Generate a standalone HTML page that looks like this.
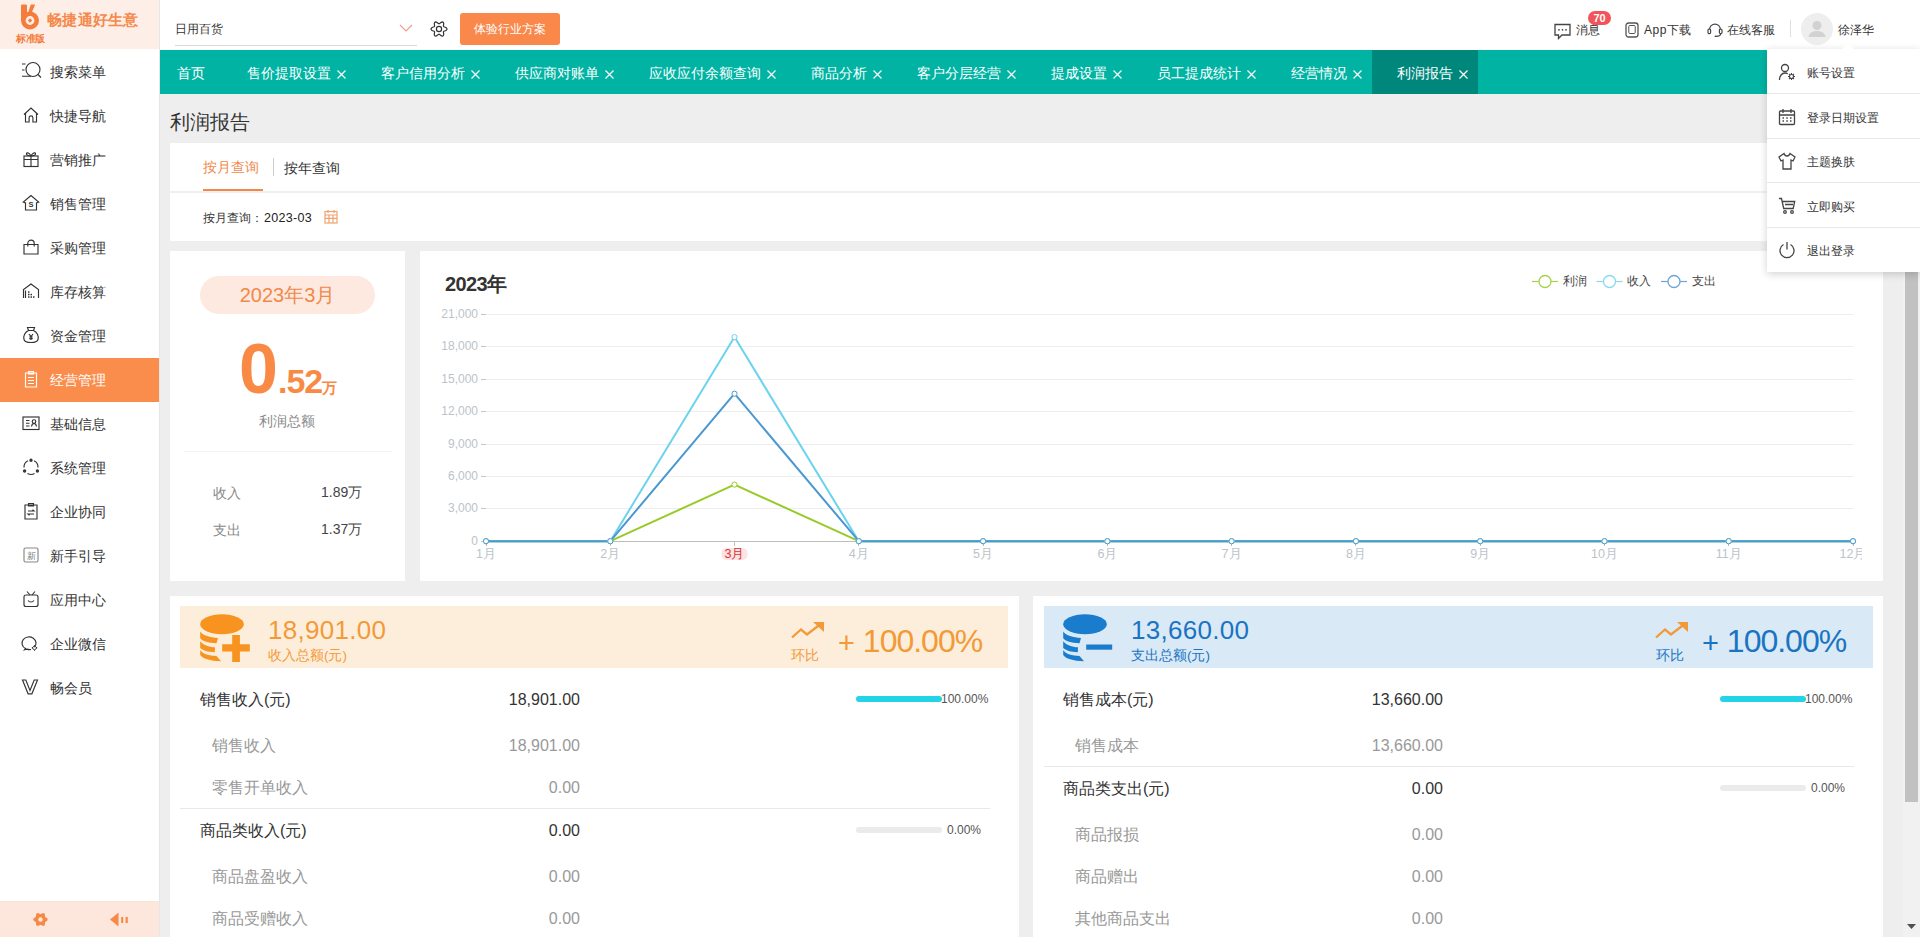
<!DOCTYPE html>
<html><head><meta charset="utf-8">
<style>
*{box-sizing:border-box;margin:0;padding:0}
html,body{width:1920px;height:937px;overflow:hidden}
body{position:relative;background:#eeeeee;font-family:"Liberation Sans",sans-serif;color:#333;font-size:14px}
.abs{position:absolute}
.nw{white-space:nowrap}
#side{left:0;top:0;width:160px;height:937px;background:#fff;border-right:1px solid #e6e6e6}
#logo{left:0;top:0;width:159px;height:49px;background:#fdefe7}
.mi{left:0;width:159px;height:44px}
.mi .ic{position:absolute;left:22px;top:12px;width:18px;height:18px;overflow:visible}
.mi .tx{position:absolute;left:50px;top:0;line-height:44px;font-size:14px;color:#333}
.mi.on{background:#fa8c4c}
.mi.on .tx{color:#fff}
#sbot{left:0;top:901px;width:159px;height:36px;background:#fde7dc;border-top:1px solid #fbe3d6}
#hdr{left:160px;top:0;width:1760px;height:50px;background:#fff}
#tabs{left:160px;top:50px;width:1760px;height:44px;background:#00b3a3}
.tab{top:0;height:44px;line-height:46px;color:#fff;font-size:14px;padding-left:25px}
.tab .x{display:inline-block;margin-left:6px;width:9px;height:9px;vertical-align:-1px}
.tab.on{background:#00877c}
.card{background:#fff}
.ht{font-size:12px;color:#333;line-height:16px}
.row{font-size:16px;color:#333;line-height:20px}
.sub{font-size:16px;color:#999;line-height:20px}
.val{text-align:right}
.bar{height:6px;border-radius:3px}
.pct{font-size:12px;color:#555;line-height:14px}
.dd{left:1767px;width:153px;height:45px;border-bottom:1px solid #e8e8e8}
.dd .ic{position:absolute;left:11px;top:14px;width:18px;height:18px}
.dd .tx{position:absolute;left:40px;top:2px;line-height:45px;font-size:12px;color:#333}
</style></head><body>

<div id="side" class="abs">
  <div id="logo" class="abs">
    <svg class="abs" style="left:14px;top:2px" width="28" height="30" viewBox="0 0 28 30">
      <circle cx="16" cy="18.5" r="9" fill="#f47c3c"/>
      <path d="M7 18.5V3.4Q7 2.4 8 2.4h4q1 0 1 1V14z" fill="#f47c3c"/>
      <path d="M16.8 2.6h3.4q.8 0 .6.8L17.6 11l-3.3-.9z" fill="#f47c3c"/>
      <circle cx="16" cy="18.5" r="4.4" fill="#fdefe7"/>
      <path d="M16 16.3l2.2 2.2-2.2 2.2-2.2-2.2z" fill="#f47c3c"/>
    </svg>
    <div class="abs nw" style="left:47px;top:11px;font-size:15px;line-height:18px;color:#f5884a;font-weight:bold;letter-spacing:0.3px">畅捷通好生意</div>
    <div class="abs nw" style="left:16px;top:33px;font-size:10px;line-height:12px;color:#f47c3c;font-weight:bold;letter-spacing:-0.5px">标准版</div>
  </div>
<div class="mi abs" style="top:50px"><svg class="ic" viewBox="0 0 18 18" fill="none" stroke="#333" stroke-width="1.15"><path d="M0 2h3.5M0 8h2.5M0 14.2h9"/><circle cx="11" cy="7.5" r="7"/><path d="M16 12.5l3 3"/></svg><span class="tx nw">搜索菜单</span></div>
<div class="mi abs" style="top:94px"><svg class="ic" viewBox="0 0 18 18" fill="none" stroke="#333" stroke-width="1.15"><path d="M2 8.5L9 2l7 6.5M3.5 7.2V16h3.6v-4.3a1.9 1.9 0 013.8 0V16h3.6V7.2"/></svg><span class="tx nw">快捷导航</span></div>
<div class="mi abs" style="top:138px"><svg class="ic" viewBox="0 0 18 18" fill="none" stroke="#333" stroke-width="1.15"><rect x="2" y="6" width="14" height="10.5"/><path d="M2 9.5h14M9 6v10.5M9 6C7.5 3 5 2 4.5 3.5S6.5 6 9 6c2.5 0 5-1 4.5-2.5S10.5 3 9 6"/></svg><span class="tx nw">营销推广</span></div>
<div class="mi abs" style="top:182px"><svg class="ic" viewBox="0 0 18 18" fill="none" stroke="#333" stroke-width="1.15"><path d="M9 1.5L1.3 8l2.2.9V16h11V8.9l2.2-.9z"/><text x="9" y="13" font-size="7.5" font-weight="bold" text-anchor="middle" fill="#333" stroke="none">S</text></svg><span class="tx nw">销售管理</span></div>
<div class="mi abs" style="top:226px"><svg class="ic" viewBox="0 0 18 18" fill="none" stroke="#333" stroke-width="1.15"><path d="M2 6.5h14V16H2zM5.8 8.5V5.3a3.2 3.2 0 016.4 0v3.2"/></svg><span class="tx nw">采购管理</span></div>
<div class="mi abs" style="top:270px"><svg class="ic" viewBox="0 0 18 18" fill="none" stroke="#333" stroke-width="1.15"><path d="M1.5 16V7.5L9 2l7.5 5.5V16M3.5 8.5V16"/><g fill="#333" stroke="none"><rect x="6" y="9.3" width="1.5" height="1.5"/><rect x="6" y="11.8" width="1.5" height="1.5"/><rect x="8.5" y="11.8" width="1.5" height="1.5"/><rect x="6" y="14.3" width="1.5" height="1.5"/><rect x="8.5" y="14.3" width="1.5" height="1.5"/><rect x="11" y="14.3" width="1.5" height="1.5"/></g></svg><span class="tx nw">库存核算</span></div>
<div class="mi abs" style="top:314px"><svg class="ic" viewBox="0 0 18 18" fill="none" stroke="#333" stroke-width="1.15"><path d="M6.5 4.5L5.5 1.5h7l-1 3M6.5 4.5h5C15 6 17 10 16 13.5 15.3 16 12.5 16.5 9 16.5S2.7 16 2 13.5C1 10 3 6 6.5 4.5z"/><path d="M7 8l2 2.5 2-2.5M9 10.5v3.5M7.3 11h3.4M7.3 12.6h3.4"/></svg><span class="tx nw">资金管理</span></div>
<div class="mi abs on" style="top:358px"><svg class="ic" viewBox="0 0 18 18" fill="none" stroke="#fff" stroke-width="1.15"><path d="M3.5 3h11v14h-11zM6.5 1.5h5V4h-5zM6 7.5h6M6 10.5h6M6 13.5h6"/></svg><span class="tx nw">经营管理</span></div>
<div class="mi abs" style="top:402px"><svg class="ic" viewBox="0 0 18 18" fill="none" stroke="#333" stroke-width="1.15"><rect x="1" y="3" width="16" height="12.5"/><path d="M4 6.5h3.5M4 9.2h3.5M4 12h3.5"/><circle cx="12" cy="7.5" r="1.8"/><path d="M9.5 12.5c.3-2 1.3-3 2.5-3s2.2 1 2.5 3"/></svg><span class="tx nw">基础信息</span></div>
<div class="mi abs" style="top:446px"><svg class="ic" viewBox="0 0 18 18" fill="none" stroke="#333" stroke-width="1.15"><path d="M6 2.8A7 7 0 002 9.5M12 2.8a7 7 0 014 6.7M5.5 15.5a7 7 0 007 0"/><circle cx="9" cy="2.2" r="1.1" fill="#444"/><circle cx="2.6" cy="13" r="1.1" fill="#444"/><circle cx="15.4" cy="13" r="1.1" fill="#444"/></svg><span class="tx nw">系统管理</span></div>
<div class="mi abs" style="top:490px"><svg class="ic" viewBox="0 0 18 18" fill="none" stroke="#333" stroke-width="1.15"><path d="M3 3h12v14H3zM6.5 1.5h5V4h-5zM6 9h6l-1.5-1.3M12 12H6l1.5 1.3"/></svg><span class="tx nw">企业协同</span></div>
<div class="mi abs" style="top:534px"><svg class="ic" viewBox="0 0 18 18" fill="none" stroke="#333" stroke-width="1.15"><rect x="2" y="2" width="14" height="14" rx="1.5" stroke="#888"/><text x="9" y="12.6" font-size="8.5" text-anchor="middle" fill="#777" stroke="none">新</text></svg><span class="tx nw">新手引导</span></div>
<div class="mi abs" style="top:578px"><svg class="ic" viewBox="0 0 18 18" fill="none" stroke="#333" stroke-width="1.15"><rect x="2" y="5" width="14" height="11.5" rx="2"/><path d="M5 1.5l3 3.5M13 1.5l-3 3.5M6 10.5c1.5 2 4.5 2 6 0"/></svg><span class="tx nw">应用中心</span></div>
<div class="mi abs" style="top:622px"><svg class="ic" viewBox="0 0 18 18" fill="none" stroke="#333" stroke-width="1.15"><path d="M12.3 13.2A7 6.2 0 10 3.5 14.5l-1 1.2 2.3-.6c1.3.5 2.7.6 4.2.4"/><path d="M12.5 11.3l1 1.6 1.6 1-1.6 1-1 1.6-1-1.6-1.6-1 1.6-1z" stroke-width="1"/></svg><span class="tx nw">企业微信</span></div>
<div class="mi abs" style="top:666px"><svg class="ic" viewBox="0 0 18 18" fill="none" stroke="#333" stroke-width="1.15"><path d="M0.5 2h3.3L8 12.5 12.2 2h3.3L9.9 15.8H6.1z"/></svg><span class="tx nw">畅会员</span></div>
  <div id="sbot" class="abs">
    <svg class="abs" style="left:32.5px;top:10px" width="15" height="15" viewBox="0 0 15 15"><path fill="#f58a46" fill-rule="evenodd" d="M14.70 7.50 L14.55 8.12 L14.15 8.67 L13.59 9.13 L13.00 9.50 L12.50 9.83 L12.18 10.20 L12.02 10.67 L11.98 11.26 L11.95 11.95 L11.84 12.67 L11.56 13.30 L11.10 13.74 L10.49 13.92 L9.81 13.84 L9.13 13.59 L8.52 13.26 L7.98 13.00 L7.50 12.90 L7.02 13.00 L6.48 13.26 L5.87 13.59 L5.19 13.84 L4.51 13.92 L3.90 13.74 L3.44 13.30 L3.16 12.67 L3.05 11.95 L3.02 11.26 L2.98 10.67 L2.82 10.20 L2.50 9.83 L2.00 9.50 L1.41 9.13 L0.85 8.67 L0.45 8.12 L0.30 7.50 L0.45 6.88 L0.85 6.33 L1.41 5.87 L2.00 5.50 L2.50 5.17 L2.82 4.80 L2.98 4.33 L3.02 3.74 L3.05 3.05 L3.16 2.33 L3.44 1.70 L3.90 1.26 L4.51 1.08 L5.19 1.16 L5.87 1.41 L6.48 1.74 L7.02 2.00 L7.50 2.10 L7.98 2.00 L8.52 1.74 L9.13 1.41 L9.81 1.16 L10.49 1.08 L11.10 1.26 L11.56 1.70 L11.84 2.33 L11.95 3.05 L11.98 3.74 L12.02 4.33 L12.18 4.80 L12.50 5.17 L13.00 5.50 L13.59 5.87 L14.15 6.33 L14.55 6.88 L14.70 7.50Z M7.5 5.3a2.2 2.2 0 110 4.4a2.2 2.2 0 110-4.4z"/></svg>
    <svg class="abs" style="left:110px;top:10px" width="20" height="16" viewBox="0 0 20 16"><path fill="#f58a46" d="M0 7.5L8.5 0.5v14z"/><rect x="11.2" y="5" width="2" height="6" fill="#f58a46"/><rect x="15.6" y="5" width="2.2" height="6" fill="#f58a46"/></svg>
  </div>
</div>

<div id="hdr" class="abs">
  <div class="abs nw" style="left:15px;top:21px;font-size:12px;line-height:16px;color:#333">日用百货</div>
  <div class="abs" style="left:15px;top:45px;width:242px;height:1px;background:#d9d9d9"></div>
  <svg class="abs" style="left:239px;top:24px" width="14" height="9" viewBox="0 0 14 9"><path d="M1 1l6 6 6-6" fill="none" stroke="#eca08e" stroke-width="1.2"/></svg>
  <svg class="abs" style="left:270px;top:20px" width="18" height="18" viewBox="0 0 18 18"><path fill="none" stroke="#333" stroke-width="1.2" stroke-linejoin="round" d="M17.00 9.00 L16.78 9.68 L16.19 10.27 L15.38 10.71 L14.54 11.02 L13.88 11.28 L13.50 11.60 L13.41 12.09 L13.52 12.79 L13.67 13.67 L13.69 14.59 L13.48 15.40 L13.00 15.93 L12.30 16.08 L11.50 15.86 L10.71 15.38 L10.02 14.81 L9.47 14.37 L9.00 14.20 L8.53 14.37 L7.98 14.81 L7.29 15.38 L6.50 15.86 L5.70 16.08 L5.00 15.93 L4.52 15.40 L4.31 14.59 L4.33 13.67 L4.48 12.79 L4.59 12.09 L4.50 11.60 L4.12 11.28 L3.46 11.02 L2.62 10.71 L1.81 10.27 L1.22 9.68 L1.00 9.00 L1.22 8.32 L1.81 7.73 L2.62 7.29 L3.46 6.98 L4.12 6.72 L4.50 6.40 L4.59 5.91 L4.48 5.21 L4.33 4.33 L4.31 3.41 L4.52 2.60 L5.00 2.07 L5.70 1.92 L6.50 2.14 L7.29 2.62 L7.98 3.19 L8.53 3.63 L9.00 3.80 L9.47 3.63 L10.02 3.19 L10.71 2.62 L11.50 2.14 L12.30 1.92 L13.00 2.07 L13.48 2.60 L13.69 3.41 L13.67 4.33 L13.52 5.21 L13.41 5.91 L13.50 6.40 L13.88 6.72 L14.54 6.98 L15.38 7.29 L16.19 7.73 L16.78 8.32 L17.00 9.00Z"/><circle cx="9" cy="9" r="2.6" fill="none" stroke="#333" stroke-width="1.2"/></svg>
  <div class="abs nw" style="left:300px;top:13px;width:100px;height:32px;border-radius:3px;background:#f9884a;color:#fff;font-size:12px;line-height:32px;text-align:center">体验行业方案</div>

  <svg class="abs" style="left:1394px;top:23px" width="17" height="17" viewBox="0 0 17 17"><path fill="none" stroke="#444" stroke-width="1.3" d="M1 1.5h15v10.5H8l-3.5 3.5V12H1z"/><circle cx="5" cy="6.8" r=".9" fill="#444"/><circle cx="8.5" cy="6.8" r=".9" fill="#444"/><circle cx="12" cy="6.8" r=".9" fill="#444"/></svg>
  <div class="abs nw ht" style="left:1416px;top:22px">消息</div>
  <div class="abs nw" style="left:1428px;top:11px;width:23px;height:14px;border-radius:7px;background:#f1545a;color:#fff;font-size:11px;font-weight:bold;line-height:14px;text-align:center">70</div>
  <svg class="abs" style="left:1465px;top:22px" width="14" height="16" viewBox="0 0 14 16"><rect x="1" y="1" width="12" height="14" rx="2.5" fill="none" stroke="#555" stroke-width="1.3"/><rect x="3.8" y="3.5" width="6.4" height="8" rx="1" fill="none" stroke="#555" stroke-width="1"/></svg>
  <div class="abs nw ht" style="left:1484px;top:22px;letter-spacing:0.5px">App下载</div>
  <svg class="abs" style="left:1547px;top:21px" width="16" height="16" viewBox="0 0 16 16"><g fill="none" stroke="#444" stroke-width="1.2"><path d="M2.6 8.5a5.4 5.4 0 0110.8 0"/><rect x="1" y="8" width="2.6" height="4.6" rx="1.2"/><rect x="12.4" y="8" width="2.6" height="4.6" rx="1.2"/><path d="M13.7 12.6c0 1.8-1.8 2.8-4.6 2.8"/></g><circle cx="8.6" cy="15.4" r="1" fill="#444"/></svg>
  <div class="abs nw ht" style="left:1567px;top:22px">在线客服</div>
  <div class="abs" style="left:1630px;top:20px;width:1px;height:17px;background:#e0e0e0"></div>
  <div class="abs" style="left:1641px;top:13px;width:32px;height:32px;border-radius:16px;background:#eeeeee;overflow:hidden">
    <svg width="32" height="32" viewBox="0 0 32 32"><circle cx="16" cy="12.5" r="4.5" fill="#d2d2d2"/><path d="M7.5 24c.5-4 4-6 8.5-6s8 2 8.5 6z" fill="#d2d2d2"/></svg>
  </div>
  <div class="abs nw ht" style="left:1678px;top:22px">徐泽华</div>
</div>

<div id="tabs" class="abs">
<div class="tab abs nw" style="left:0;width:62px;padding-left:17px">首页</div>
<div class="tab abs nw" style="left:62px;width:134px">售价提取设置<svg class="x" viewBox="0 0 9 9" stroke="#fff" stroke-width="1.2"><path d="M.5 .5l8 8M8.5 .5l-8 8"/></svg></div>
<div class="tab abs nw" style="left:196px;width:134px">客户信用分析<svg class="x" viewBox="0 0 9 9" stroke="#fff" stroke-width="1.2"><path d="M.5 .5l8 8M8.5 .5l-8 8"/></svg></div>
<div class="tab abs nw" style="left:330px;width:134px">供应商对账单<svg class="x" viewBox="0 0 9 9" stroke="#fff" stroke-width="1.2"><path d="M.5 .5l8 8M8.5 .5l-8 8"/></svg></div>
<div class="tab abs nw" style="left:464px;width:162px">应收应付余额查询<svg class="x" viewBox="0 0 9 9" stroke="#fff" stroke-width="1.2"><path d="M.5 .5l8 8M8.5 .5l-8 8"/></svg></div>
<div class="tab abs nw" style="left:626px;width:106px">商品分析<svg class="x" viewBox="0 0 9 9" stroke="#fff" stroke-width="1.2"><path d="M.5 .5l8 8M8.5 .5l-8 8"/></svg></div>
<div class="tab abs nw" style="left:732px;width:134px">客户分层经营<svg class="x" viewBox="0 0 9 9" stroke="#fff" stroke-width="1.2"><path d="M.5 .5l8 8M8.5 .5l-8 8"/></svg></div>
<div class="tab abs nw" style="left:866px;width:106px">提成设置<svg class="x" viewBox="0 0 9 9" stroke="#fff" stroke-width="1.2"><path d="M.5 .5l8 8M8.5 .5l-8 8"/></svg></div>
<div class="tab abs nw" style="left:972px;width:134px">员工提成统计<svg class="x" viewBox="0 0 9 9" stroke="#fff" stroke-width="1.2"><path d="M.5 .5l8 8M8.5 .5l-8 8"/></svg></div>
<div class="tab abs nw" style="left:1106px;width:106px">经营情况<svg class="x" viewBox="0 0 9 9" stroke="#fff" stroke-width="1.2"><path d="M.5 .5l8 8M8.5 .5l-8 8"/></svg></div>
<div class="tab abs nw on" style="left:1212px;width:106px">利润报告<svg class="x" viewBox="0 0 9 9" stroke="#fff" stroke-width="1.2"><path d="M.5 .5l8 8M8.5 .5l-8 8"/></svg></div>
</div>

<!-- page title -->
<div class="abs nw" style="left:170px;top:110px;font-size:20px;line-height:24px;color:#333">利润报告</div>

<!-- query card -->
<div class="abs card" style="left:170px;top:143px;width:1735px;height:98px">
  <div class="abs nw" style="left:33px;top:15px;font-size:14px;line-height:18px;color:#f0894a">按月查询</div>
  <div class="abs" style="left:33px;top:46px;width:60px;height:2px;background:#f0894a"></div>
  <div class="abs" style="left:103px;top:15px;width:1px;height:18px;background:#ccc"></div>
  <div class="abs nw" style="left:114px;top:16px;font-size:14px;line-height:18px;color:#333">按年查询</div>
  <div class="abs" style="left:0;top:48px;width:1735px;height:2px;background:#f0f0f0"></div>
  <div class="abs nw" style="left:33px;top:67px;font-size:12px;line-height:16px;color:#333">按月查询：</div><div class="abs nw" style="left:94px;top:67px;font-size:12.5px;line-height:16px;color:#222;letter-spacing:0.3px">2023-03</div>
  <svg class="abs" style="left:154px;top:66px" width="14" height="15" viewBox="0 0 14 15"><g fill="none" stroke="#f0a36e" stroke-width="1.2"><rect x="1" y="2.5" width="12" height="11.5"/><path d="M1 6h12M1 9.3h12M5 6v8M9 6v8M4 1v3M10 1v3"/></g></svg>
</div>

<!-- summary card -->
<div class="abs card" style="left:170px;top:251px;width:235px;height:330px">
  <div class="abs nw" style="left:30px;top:25px;width:175px;height:38px;border-radius:19px;background:#fde9df;color:#f0894a;font-size:20px;line-height:38px;text-align:center">2023年3月</div>
  <div class="abs nw" style="left:69px;top:78px;color:#f98a46;font-weight:bold;line-height:80px">
    <span style="font-size:70px">0</span><span style="font-size:34px;margin-left:0px;letter-spacing:-1px">.52</span><span style="font-size:15px;margin-left:0px">万</span>
  </div>
  <div class="abs nw" style="left:89px;top:161px;font-size:14px;line-height:18px;color:#888">利润总额</div>
  <div class="abs" style="left:14px;top:200px;width:208px;height:1px;background:#f3f3f3"></div>
  <div class="abs nw" style="left:43px;top:233px;font-size:14px;line-height:18px;color:#888">收入</div>
  <div class="abs nw" style="left:151px;top:232px;font-size:14px;line-height:18px;color:#444">1.89万</div>
  <div class="abs nw" style="left:43px;top:270px;font-size:14px;line-height:18px;color:#888">支出</div>
  <div class="abs nw" style="left:151px;top:269px;font-size:14px;line-height:18px;color:#444">1.37万</div>
</div>

<!-- chart card -->
<div class="abs card" style="left:420px;top:251px;width:1463px;height:330px"></div>
<svg class="abs" style="left:420px;top:251px" width="1463" height="330" viewBox="420 251 1463 330">
<path d="M486 508.5H1853" stroke="#eceef1" stroke-width="1"/>
<path d="M486 476.5H1853" stroke="#eceef1" stroke-width="1"/>
<path d="M486 444.5H1853" stroke="#eceef1" stroke-width="1"/>
<path d="M486 411.5H1853" stroke="#eceef1" stroke-width="1"/>
<path d="M486 379.5H1853" stroke="#eceef1" stroke-width="1"/>
<path d="M486 346.5H1853" stroke="#eceef1" stroke-width="1"/>
<path d="M486 314.5H1853" stroke="#eceef1" stroke-width="1"/>
<path d="M481 541.5H486" stroke="#c4c8ce" stroke-width="1"/>
<text x="478" y="544.9" text-anchor="end" font-size="12" fill="#bcc3c9">0</text>
<path d="M481 508.5H486" stroke="#c4c8ce" stroke-width="1"/>
<text x="478" y="511.9" text-anchor="end" font-size="12" fill="#bcc3c9">3,000</text>
<path d="M481 476.5H486" stroke="#c4c8ce" stroke-width="1"/>
<text x="478" y="479.9" text-anchor="end" font-size="12" fill="#bcc3c9">6,000</text>
<path d="M481 444.5H486" stroke="#c4c8ce" stroke-width="1"/>
<text x="478" y="447.9" text-anchor="end" font-size="12" fill="#bcc3c9">9,000</text>
<path d="M481 411.5H486" stroke="#c4c8ce" stroke-width="1"/>
<text x="478" y="414.9" text-anchor="end" font-size="12" fill="#bcc3c9">12,000</text>
<path d="M481 379.5H486" stroke="#c4c8ce" stroke-width="1"/>
<text x="478" y="382.9" text-anchor="end" font-size="12" fill="#bcc3c9">15,000</text>
<path d="M481 346.5H486" stroke="#c4c8ce" stroke-width="1"/>
<text x="478" y="349.9" text-anchor="end" font-size="12" fill="#bcc3c9">18,000</text>
<path d="M481 314.5H486" stroke="#c4c8ce" stroke-width="1"/>
<text x="478" y="317.9" text-anchor="end" font-size="12" fill="#bcc3c9">21,000</text>
<path d="M486 541.5H1853" stroke="#bdbdbd" stroke-width="1"/>
<path d="M486.5 542V546" stroke="#bdbdbd" stroke-width="1"/>
<path d="M610.5 542V546" stroke="#bdbdbd" stroke-width="1"/>
<path d="M734.5 542V546" stroke="#bdbdbd" stroke-width="1"/>
<path d="M858.5 542V546" stroke="#bdbdbd" stroke-width="1"/>
<path d="M983.5 542V546" stroke="#bdbdbd" stroke-width="1"/>
<path d="M1107.5 542V546" stroke="#bdbdbd" stroke-width="1"/>
<path d="M1231.5 542V546" stroke="#bdbdbd" stroke-width="1"/>
<path d="M1355.5 542V546" stroke="#bdbdbd" stroke-width="1"/>
<path d="M1480.5 542V546" stroke="#bdbdbd" stroke-width="1"/>
<path d="M1604.5 542V546" stroke="#bdbdbd" stroke-width="1"/>
<path d="M1728.5 542V546" stroke="#bdbdbd" stroke-width="1"/>
<path d="M1853.5 542V546" stroke="#bdbdbd" stroke-width="1"/>
<defs><clipPath id="cl"><rect x="420" y="251" width="1442" height="330"/></clipPath></defs><g clip-path="url(#cl)">
<text x="486.0" y="557.8" text-anchor="middle" font-size="12.5" fill="#bcc3c9">1月</text>
<text x="610.3" y="557.8" text-anchor="middle" font-size="12.5" fill="#bcc3c9">2月</text>
<rect x="721.5" y="548" width="26" height="12" rx="5" fill="#fde3e1"/>
<text x="734.5" y="557.8" text-anchor="middle" font-size="12.5" fill="#d8343c">3月</text>
<text x="858.8" y="557.8" text-anchor="middle" font-size="12.5" fill="#bcc3c9">4月</text>
<text x="983.1" y="557.8" text-anchor="middle" font-size="12.5" fill="#bcc3c9">5月</text>
<text x="1107.4" y="557.8" text-anchor="middle" font-size="12.5" fill="#bcc3c9">6月</text>
<text x="1231.6" y="557.8" text-anchor="middle" font-size="12.5" fill="#bcc3c9">7月</text>
<text x="1355.9" y="557.8" text-anchor="middle" font-size="12.5" fill="#bcc3c9">8月</text>
<text x="1480.2" y="557.8" text-anchor="middle" font-size="12.5" fill="#bcc3c9">9月</text>
<text x="1604.5" y="557.8" text-anchor="middle" font-size="12.5" fill="#bcc3c9">10月</text>
<text x="1728.7" y="557.8" text-anchor="middle" font-size="12.5" fill="#bcc3c9">11月</text>
<text x="1853.0" y="557.8" text-anchor="middle" font-size="12.5" fill="#bcc3c9">12月</text>
</g>
<polyline points="486.0,541.2 610.3,541.2 734.5,484.6 858.8,541.2 983.1,541.2 1107.4,541.2 1231.6,541.2 1355.9,541.2 1480.2,541.2 1604.5,541.2 1728.7,541.2 1853.0,541.2" fill="none" stroke="#97cb27" stroke-width="2" stroke-linejoin="round"/>
<polyline points="486.0,541.2 610.3,541.2 734.5,337.1 858.8,541.2 983.1,541.2 1107.4,541.2 1231.6,541.2 1355.9,541.2 1480.2,541.2 1604.5,541.2 1728.7,541.2 1853.0,541.2" fill="none" stroke="#6cd3ef" stroke-width="2" stroke-linejoin="round"/>
<polyline points="486.0,541.2 610.3,541.2 734.5,393.7 858.8,541.2 983.1,541.2 1107.4,541.2 1231.6,541.2 1355.9,541.2 1480.2,541.2 1604.5,541.2 1728.7,541.2 1853.0,541.2" fill="none" stroke="#4a98d2" stroke-width="2" stroke-linejoin="round"/>
<circle cx="486.0" cy="541.2" r="2.6" fill="#fff" stroke="#97cb27" stroke-width="1"/>
<circle cx="610.3" cy="541.2" r="2.6" fill="#fff" stroke="#97cb27" stroke-width="1"/>
<circle cx="734.5" cy="484.6" r="2.6" fill="#fff" stroke="#97cb27" stroke-width="1"/>
<circle cx="858.8" cy="541.2" r="2.6" fill="#fff" stroke="#97cb27" stroke-width="1"/>
<circle cx="983.1" cy="541.2" r="2.6" fill="#fff" stroke="#97cb27" stroke-width="1"/>
<circle cx="1107.4" cy="541.2" r="2.6" fill="#fff" stroke="#97cb27" stroke-width="1"/>
<circle cx="1231.6" cy="541.2" r="2.6" fill="#fff" stroke="#97cb27" stroke-width="1"/>
<circle cx="1355.9" cy="541.2" r="2.6" fill="#fff" stroke="#97cb27" stroke-width="1"/>
<circle cx="1480.2" cy="541.2" r="2.6" fill="#fff" stroke="#97cb27" stroke-width="1"/>
<circle cx="1604.5" cy="541.2" r="2.6" fill="#fff" stroke="#97cb27" stroke-width="1"/>
<circle cx="1728.7" cy="541.2" r="2.6" fill="#fff" stroke="#97cb27" stroke-width="1"/>
<circle cx="1853.0" cy="541.2" r="2.6" fill="#fff" stroke="#97cb27" stroke-width="1"/>
<circle cx="486.0" cy="541.2" r="2.6" fill="#fff" stroke="#6cd3ef" stroke-width="1"/>
<circle cx="610.3" cy="541.2" r="2.6" fill="#fff" stroke="#6cd3ef" stroke-width="1"/>
<circle cx="734.5" cy="337.1" r="2.6" fill="#fff" stroke="#6cd3ef" stroke-width="1"/>
<circle cx="858.8" cy="541.2" r="2.6" fill="#fff" stroke="#6cd3ef" stroke-width="1"/>
<circle cx="983.1" cy="541.2" r="2.6" fill="#fff" stroke="#6cd3ef" stroke-width="1"/>
<circle cx="1107.4" cy="541.2" r="2.6" fill="#fff" stroke="#6cd3ef" stroke-width="1"/>
<circle cx="1231.6" cy="541.2" r="2.6" fill="#fff" stroke="#6cd3ef" stroke-width="1"/>
<circle cx="1355.9" cy="541.2" r="2.6" fill="#fff" stroke="#6cd3ef" stroke-width="1"/>
<circle cx="1480.2" cy="541.2" r="2.6" fill="#fff" stroke="#6cd3ef" stroke-width="1"/>
<circle cx="1604.5" cy="541.2" r="2.6" fill="#fff" stroke="#6cd3ef" stroke-width="1"/>
<circle cx="1728.7" cy="541.2" r="2.6" fill="#fff" stroke="#6cd3ef" stroke-width="1"/>
<circle cx="1853.0" cy="541.2" r="2.6" fill="#fff" stroke="#6cd3ef" stroke-width="1"/>
<circle cx="486.0" cy="541.2" r="2.6" fill="#fff" stroke="#4a98d2" stroke-width="1"/>
<circle cx="610.3" cy="541.2" r="2.6" fill="#fff" stroke="#4a98d2" stroke-width="1"/>
<circle cx="734.5" cy="393.7" r="2.6" fill="#fff" stroke="#4a98d2" stroke-width="1"/>
<circle cx="858.8" cy="541.2" r="2.6" fill="#fff" stroke="#4a98d2" stroke-width="1"/>
<circle cx="983.1" cy="541.2" r="2.6" fill="#fff" stroke="#4a98d2" stroke-width="1"/>
<circle cx="1107.4" cy="541.2" r="2.6" fill="#fff" stroke="#4a98d2" stroke-width="1"/>
<circle cx="1231.6" cy="541.2" r="2.6" fill="#fff" stroke="#4a98d2" stroke-width="1"/>
<circle cx="1355.9" cy="541.2" r="2.6" fill="#fff" stroke="#4a98d2" stroke-width="1"/>
<circle cx="1480.2" cy="541.2" r="2.6" fill="#fff" stroke="#4a98d2" stroke-width="1"/>
<circle cx="1604.5" cy="541.2" r="2.6" fill="#fff" stroke="#4a98d2" stroke-width="1"/>
<circle cx="1728.7" cy="541.2" r="2.6" fill="#fff" stroke="#4a98d2" stroke-width="1"/>
<circle cx="1853.0" cy="541.2" r="2.6" fill="#fff" stroke="#4a98d2" stroke-width="1"/>
<text x="445" y="290.5" font-size="20" font-weight="bold" fill="#333" letter-spacing="-0.6">2023年</text>
<path d="M1532 281.5H1558" stroke="#a6d24a" stroke-width="1.2"/><circle cx="1545" cy="281.5" r="6" fill="#fff" stroke="#a6d24a" stroke-width="1.3"/>
<text x="1562.5" y="285" font-size="12" fill="#444">利润</text>
<path d="M1596.5 281.5H1622.5" stroke="#86d9ef" stroke-width="1.2"/><circle cx="1609.5" cy="281.5" r="6" fill="#fff" stroke="#86d9ef" stroke-width="1.3"/>
<text x="1627.0" y="285" font-size="12" fill="#444">收入</text>
<path d="M1661 281.5H1687" stroke="#6fa4d6" stroke-width="1.2"/><circle cx="1674" cy="281.5" r="6" fill="#fff" stroke="#6fa4d6" stroke-width="1.3"/>
<text x="1691.5" y="285" font-size="12" fill="#444">支出</text>
</svg>

<!-- income card -->
<div class="abs card" style="left:170px;top:596px;width:849px;height:341px">
  <div class="abs" style="left:10px;top:10px;width:828px;height:62px;background:#fdeedc"></div>
  <svg class="abs" style="left:25px;top:12px" width="60" height="60" viewBox="0 0 60 60">
    <g fill="#f7931e">
    <ellipse cx="27" cy="16.2" rx="21.8" ry="10"/>
    <path d="M5.2 23.5C8 27.5 15 29.5 23 30L21.5 35.3C13 35 7.5 33 5.2 30.3z"/>
    <path d="M5.2 33.2C8 37 14 39 20 39.3L19.8 44.3C13 44 7.5 42.3 5.2 40z"/>
    <path d="M5.2 42.3C8 46 14 47.8 21.5 48L26 53.3C15 53 7.5 50.5 5.2 47z"/>
    <path d="M37.2 27h7.7v9.2h9.9v7.4h-9.9V54h-7.7v-10.4H27.2v-7.4h10z"/>
    </g>
  </svg>
  <div class="abs nw" style="left:98px;top:19px;font-size:26px;line-height:30px;letter-spacing:0.3px;color:#f39a38">18,901.00</div>
  <div class="abs nw" style="left:98px;top:52px;font-size:13.5px;line-height:16px;color:#f39a38">收入总额(元)</div>
  <svg class="abs" style="left:621px;top:25px" width="34" height="18" viewBox="0 0 34 18"><path d="M1 16.5l9-8 6 5 13-10" fill="none" stroke="#f39a38" stroke-width="2.3"/><path d="M22 1h11v10z" fill="#f39a38"/></svg>
  <div class="abs nw" style="left:621px;top:51px;font-size:14px;line-height:16px;color:#f39a38">环比</div>
  <div class="abs nw" style="left:668px;top:28px;font-size:32px;line-height:34px;letter-spacing:-1px;color:#f39a38"><span style="font-size:29px;position:relative;top:1px;letter-spacing:0">+</span> 100.00%</div>

  <div class="abs nw row" style="left:30px;top:94px">销售收入(元)</div>
  <div class="abs nw row val" style="left:310px;top:94px;width:100px">18,901.00</div>
  <div class="abs bar" style="left:686px;top:100px;width:86px;background:#24d3e6"></div>
  <div class="abs nw pct" style="left:771px;top:96px">100.00%</div>
  <div class="abs nw sub" style="left:42px;top:140px">销售收入</div>
  <div class="abs nw sub val" style="left:310px;top:140px;width:100px">18,901.00</div>
  <div class="abs nw sub" style="left:42px;top:182px">零售开单收入</div>
  <div class="abs nw sub val" style="left:310px;top:182px;width:100px">0.00</div>
  <div class="abs" style="left:10px;top:212px;width:810px;height:1px;background:#e8e8e8"></div>
  <div class="abs nw row" style="left:30px;top:225px">商品类收入(元)</div>
  <div class="abs nw row val" style="left:310px;top:225px;width:100px">0.00</div>
  <div class="abs bar" style="left:686px;top:231px;width:86px;background:#ebebeb"></div>
  <div class="abs nw pct" style="left:777px;top:227px">0.00%</div>
  <div class="abs nw sub" style="left:42px;top:271px">商品盘盈收入</div>
  <div class="abs nw sub val" style="left:310px;top:271px;width:100px">0.00</div>
  <div class="abs nw sub" style="left:42px;top:313px">商品受赠收入</div>
  <div class="abs nw sub val" style="left:310px;top:313px;width:100px">0.00</div>
</div>

<!-- expense card -->
<div class="abs card" style="left:1033px;top:596px;width:850px;height:341px">
  <div class="abs" style="left:11px;top:10px;width:829px;height:62px;background:#d9eaf6"></div>
  <svg class="abs" style="left:25px;top:12px" width="60" height="60" viewBox="0 0 60 60">
    <g fill="#1a7ccd">
    <ellipse cx="27" cy="16.2" rx="21.8" ry="10"/>
    <path d="M5.2 23.5C8 27.5 15 29.5 23 30L21.5 35.3C13 35 7.5 33 5.2 30.3z"/>
    <path d="M5.2 33.2C8 37 14 39 20 39.3L19.8 44.3C13 44 7.5 42.3 5.2 40z"/>
    <path d="M5.2 42.3C8 46 14 47.8 21.5 48L26 53.3C15 53 7.5 50.5 5.2 47z"/>
    <path d="M28.2 36.5h26v5.2h-26z"/>
    </g>
  </svg>
  <div class="abs nw" style="left:98px;top:19px;font-size:26px;line-height:30px;letter-spacing:0.3px;color:#1a74c2">13,660.00</div>
  <div class="abs nw" style="left:98px;top:52px;font-size:13.5px;line-height:16px;color:#1a74c2">支出总额(元)</div>
  <svg class="abs" style="left:622px;top:25px" width="34" height="18" viewBox="0 0 34 18"><path d="M1 16.5l9-8 6 5 13-10" fill="none" stroke="#f39a38" stroke-width="2.3"/><path d="M22 1h11v10z" fill="#f39a38"/></svg>
  <div class="abs nw" style="left:623px;top:51px;font-size:14px;line-height:16px;color:#1a74c2">环比</div>
  <div class="abs nw" style="left:669px;top:28px;font-size:32px;line-height:34px;letter-spacing:-1px;color:#1a74c2"><span style="font-size:29px;position:relative;top:1px;letter-spacing:0">+</span> 100.00%</div>

  <div class="abs nw row" style="left:30px;top:94px">销售成本(元)</div>
  <div class="abs nw row val" style="left:310px;top:94px;width:100px">13,660.00</div>
  <div class="abs bar" style="left:687px;top:100px;width:86px;background:#24d3e6"></div>
  <div class="abs nw pct" style="left:772px;top:96px">100.00%</div>
  <div class="abs nw sub" style="left:42px;top:140px">销售成本</div>
  <div class="abs nw sub val" style="left:310px;top:140px;width:100px">13,660.00</div>
  <div class="abs" style="left:11px;top:170px;width:810px;height:1px;background:#e8e8e8"></div>
  <div class="abs nw row" style="left:30px;top:183px">商品类支出(元)</div>
  <div class="abs nw row val" style="left:310px;top:183px;width:100px">0.00</div>
  <div class="abs bar" style="left:687px;top:189px;width:86px;background:#ebebeb"></div>
  <div class="abs nw pct" style="left:778px;top:185px">0.00%</div>
  <div class="abs nw sub" style="left:42px;top:229px">商品报损</div>
  <div class="abs nw sub val" style="left:310px;top:229px;width:100px">0.00</div>
  <div class="abs nw sub" style="left:42px;top:271px">商品赠出</div>
  <div class="abs nw sub val" style="left:310px;top:271px;width:100px">0.00</div>
  <div class="abs nw sub" style="left:42px;top:313px">其他商品支出</div>
  <div class="abs nw sub val" style="left:310px;top:313px;width:100px">0.00</div>
</div>

<!-- scrollbar -->
<div class="abs" style="left:1903px;top:94px;width:17px;height:843px;background:#f1f1f1"></div>
<div class="abs" style="left:1905px;top:94px;width:13px;height:708px;background:#c1c1c1"></div>
<svg class="abs" style="left:1907px;top:924px" width="9" height="6" viewBox="0 0 9 6"><path d="M0 0h9L4.5 5z" fill="#505050"/></svg>

<!-- dropdown -->
<div class="abs" style="left:1767px;top:49px;width:153px;height:223px;background:#fff;box-shadow:0 2px 8px rgba(0,0,0,.18)">
</div>
<svg class="abs" style="left:1841px;top:43px" width="14" height="7" viewBox="0 0 14 7"><path d="M0 7L7 0l7 7z" fill="#fff"/></svg>
<div class="dd abs" style="top:49px;"><svg class="ic" viewBox="0 0 18 18" fill="none" stroke="#444" stroke-width="1.3"><circle cx="7" cy="5" r="3.5"/><path d="M1.5 17c0-4 2.3-7 5.5-7 1 0 2 .3 2.7.8"/><circle cx="13.5" cy="13.5" r="2" stroke-width="1.1"/><path d="M13.5 10v1.3M13.5 15.7V17M10 13.5h1.3M15.7 13.5H17M11 11l.9.9M15.1 15.1l.9.9M11 16l.9-.9M15.1 11.9l.9-.9" stroke-width="1.1"/></svg><span class="tx nw">账号设置</span></div>
<div class="dd abs" style="top:94px;"><svg class="ic" viewBox="0 0 18 18" fill="none" stroke="#444" stroke-width="1.3"><rect x="1.5" y="3" width="15" height="13.5" rx="1"/><path d="M1.5 7h15M5 1v4M13 1v4M4.5 10h1.5M8.3 10h1.5M12 10h1.5M4.5 13h1.5M8.3 13h1.5M12 13h1.5"/></svg><span class="tx nw">登录日期设置</span></div>
<div class="dd abs" style="top:138px;"><svg class="ic" viewBox="0 0 18 18" fill="none" stroke="#444" stroke-width="1.3"><path d="M6 1.5L1 5l2 4 2-1v9h8V8l2 1 2-4-5-3.5c-.5 1.5-1.5 2.5-3 2.5S6.5 3 6 1.5z"/></svg><span class="tx nw">主题换肤</span></div>
<div class="dd abs" style="top:183px;"><svg class="ic" viewBox="0 0 18 18" fill="none" stroke="#444" stroke-width="1.3"><path d="M1 1.5h2.5l2.2 10h9.5l1.5-7H4.2M7 7.5h8"/><circle cx="7" cy="15" r="1.3"/><circle cx="14" cy="15" r="1.3"/></svg><span class="tx nw">立即购买</span></div>
<div class="dd abs" style="top:227px;border-bottom:none;"><svg class="ic" viewBox="0 0 18 18" fill="none" stroke="#444" stroke-width="1.3"><path d="M5.5 3.5a7 7 0 107 0M9 1v7.5"/></svg><span class="tx nw">退出登录</span></div>

</body></html>
